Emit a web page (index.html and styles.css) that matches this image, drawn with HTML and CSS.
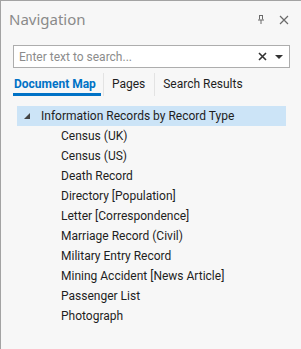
FILE: index.html
```html
<!DOCTYPE html>
<html>
<head>
<meta charset="utf-8">
<link rel="stylesheet" href="styles.css">
</head>
<body>
<div class="panel">
  <div class="header">
    <span class="title">Navigation</span>
    <span class="hdr-icons">
      <svg class="pin" width="8" height="9" viewBox="0 0 8 9"><path d="M2 0.5h4M2.5 0.5v4M5.5 0.5v4M1 5h6M4 5v4" stroke="#6a6a6a" stroke-width="1" fill="none"/></svg>
      <svg class="close" width="10" height="10" viewBox="0 0 10 10"><path d="M1 1L9 9M9 1L1 9" stroke="#6a6a6a" stroke-width="1.2" fill="none"/></svg>
    </span>
  </div>
  <div class="search">
    <span class="placeholder">Enter text to search...</span>
    <svg class="sx" width="9" height="9" viewBox="0 0 9 9"><path d="M1 1L8 8M8 1L1 8" stroke="#333" stroke-width="1.6" fill="none"/></svg>
    <svg class="sdd" width="8" height="4" viewBox="0 0 8 4"><path d="M0 0h8L4 4z" fill="#333"/></svg>
  </div>
  <div class="tabs">
    <div class="tab active">Document Map</div>
    <div class="sep"></div>
    <div class="tab">Pages</div>
    <div class="sep"></div>
    <div class="tab">Search Results</div>
  </div>
  <div class="tree">
    <div class="row root">
      <svg class="tri" width="6" height="6" viewBox="0 0 6 6"><path d="M6 0V6H0z" fill="#444"/></svg>
      <span>Information Records by Record Type</span>
    </div>
    <div class="row child">Census (UK)</div>
    <div class="row child">Census (US)</div>
    <div class="row child">Death Record</div>
    <div class="row child">Directory [Population]</div>
    <div class="row child">Letter [Correspondence]</div>
    <div class="row child">Marriage Record (Civil)</div>
    <div class="row child">Military Entry Record</div>
    <div class="row child">Mining Accident [News Article]</div>
    <div class="row child">Passenger List</div>
    <div class="row child">Photograph</div>
  </div>
</div>
</body>
</html>
```

FILE: styles.css
```css
html, body {
  margin: 0;
  padding: 0;
  background: #f7f7f7;
}
body {
  font-family: Roboto, "Noto Sans", sans-serif;
  color: #1e1e1e;
}
.panel {
  box-sizing: border-box;
  width: 301px;
  height: 349px;
  border-top: 1px solid #a3a3a3;
  border-left: 1px solid #a3a3a3;
  background: #f7f7f7;
}
.header {
  display: flex;
  align-items: center;
  justify-content: space-between;
  height: 35px;
  padding: 0 12px 0 8px;
}
.title {
  font-family: "Noto Sans", sans-serif;
  font-size: 15px;
  color: #8a8a8a;
  margin-top: 1px;
}
.hdr-icons {
  display: flex;
  align-items: center;
  gap: 14px;
  margin-top: 2px;
}
.search {
  box-sizing: border-box;
  margin: 9px 11px 0 12px;
  height: 23px;
  border: 1px solid #adadad;
  background: #fff;
  display: flex;
  align-items: center;
  padding: 0 6px 0 5px;
}
.placeholder {
  flex: 1;
  font-size: 12px;
  color: #8c8c8c;
}
.sx { margin-right: 8px; }
.tabs {
  display: flex;
  align-items: stretch;
  margin: 5px 0 0 12px;
  height: 23px;
}
.tab {
  font-size: 12px;
  padding: 4px 7px 0;
  color: #1e1e1e;
}
.tab.active {
  color: #0072c6;
  font-weight: bold;
  padding-left: 1px;
  padding-right: 5px;
  border-bottom: 3px solid #0072c6;
}
.sep {
  width: 1px;
  background: #e3e3e3;
  margin: 0 1px 0 2px;
}
.tree {
  margin: 10px 15px 0 16px;
}
.row {
  height: 20px;
  line-height: 20px;
  font-size: 12px;
  color: #1e1e1e;
}
.root {
  background: #cce4f7;
  display: flex;
  align-items: center;
}
.tri { margin: 0 11px 0 7px; }
.child { padding-left: 44px; }
```
